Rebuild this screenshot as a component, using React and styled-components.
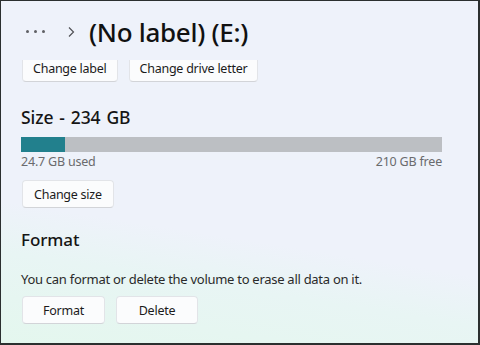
import React from "react";
import styled, { createGlobalStyle } from "styled-components";

const Global = createGlobalStyle`
  html, body { margin: 0; padding: 0; background: #2b2f2f; }
  * { box-sizing: border-box; }
`;

const Frame = styled.div`
  width: 480px;
  height: 345px;
  border-style: solid;
  border-color: #2b2f2f;
  border-width: 1px 2px 2px 1px;
  overflow: hidden;
  font-family: "Noto Sans", "Open Sans", sans-serif;
  color: #1b1b1b;
  background: linear-gradient(189deg, #eef2fa 0%, #eef2fa 66%, #e8f5f4 78%, #e4f7ee 100%);
  display: flex;
  flex-direction: column;
  padding: 0 36px 0 20px;
`;

const Header = styled.div`
  display: flex;
  align-items: center;
  height: 59px;
  padding-top: 2px;
`;

const Dots = styled.div`
  display: flex;
  gap: 5px;
  margin-left: 5px;
  margin-right: 22px;
  span {
    width: 3px;
    height: 3px;
    border-radius: 50%;
    background: #5f6064;
  }
`;

const Title = styled.h1`
  margin: 0 0 0 14px;
  font-size: 26px;
  font-weight: 500;
  letter-spacing: -0.3px;
  line-height: 34px;
  color: #111;
`;

const Clip = styled.div`
  height: 23px;
  overflow: hidden;
  display: flex;
  align-items: flex-end;
  padding-bottom: 1px;
`;

const Row = styled.div`
  display: flex;
  gap: ${(p) => p.$gap || 11}px;
  margin-top: ${(p) => p.$mt || 0}px;
  margin-left: 1px;
`;

const Button = styled.button`
  height: 28px;
  min-width: ${(p) => p.$minw || 0}px;
  padding: 0 ${(p) => p.$px || 11}px;
  background: #fbfcfd;
  border: 1px solid #e2e4e8;
  border-bottom-color: #d2d4d8;
  border-radius: 4px;
  font-family: inherit;
  font-size: 12.5px;
  letter-spacing: -0.25px;
  color: #1b1b1b;
  flex-shrink: 0;
`;

const Heading = styled.h2`
  margin: ${(p) => p.$mt}px 0 0 0;
  font-size: ${(p) => p.$fs || 17}px;
  font-weight: 500;
  line-height: 24px;
  letter-spacing: -0.1px;
  word-spacing: ${(p) => p.$ws || 0}px;
  color: #151515;
`;

const Bar = styled.div`
  margin-top: 8px;
  height: 15px;
  width: 421px;
  background: #bcbfc3;
  display: flex;
`;

const Used = styled.div`
  background: #22808d;
  height: 100%;
`;

const Legend = styled.div`
  width: 421px;
  display: flex;
  justify-content: space-between;
  font-size: 12.5px;
  line-height: 18px;
  letter-spacing: -0.2px;
  color: #6a6b6d;
  margin-top: 1px;
`;

const Text = styled.p`
  margin: 18px 0 0 0;
  font-size: 13px;
  line-height: 18px;
  letter-spacing: -0.28px;
  color: #2a2a2a;
`;

function Chevron() {
  return (
    <svg width="8" height="12" viewBox="0 0 8 12">
      <path d="M2 1.5 L6.5 6 L2 10.5" fill="none" stroke="#505155" strokeWidth="1.2" />
    </svg>
  );
}

export default function App() {
  const used = 24.7;
  const total = 234;
  return (
    <>
      <Global />
      <Frame>
        <Header>
          <Dots>
            <span />
            <span />
            <span />
          </Dots>
          <Chevron />
          <Title>(No label) (E:)</Title>
        </Header>
        <Clip>
          <Row>
            <Button $px={10}>Change label</Button>
            <Button $px={10}>Change drive letter</Button>
          </Row>
        </Clip>
        <Heading $mt={22} $fs={17.5} $ws={1.5}>Size - 234 GB</Heading>
        <Bar>
          <Used style={{ width: `${(used / total) * 100}%` }} />
        </Bar>
        <Legend>
          <span>24.7 GB used</span>
          <span>210 GB free</span>
        </Legend>
        <Row $mt={9}>
          <Button $px={11}>Change size</Button>
        </Row>
        <Heading $mt={20}>Format</Heading>
        <Text>You can format or delete the volume to erase all data on it.</Text>
        <Row $mt={8} $gap={11}>
          <Button $minw={83}>Format</Button>
          <Button $minw={82}>Delete</Button>
        </Row>
      </Frame>
    </>
  );
}
